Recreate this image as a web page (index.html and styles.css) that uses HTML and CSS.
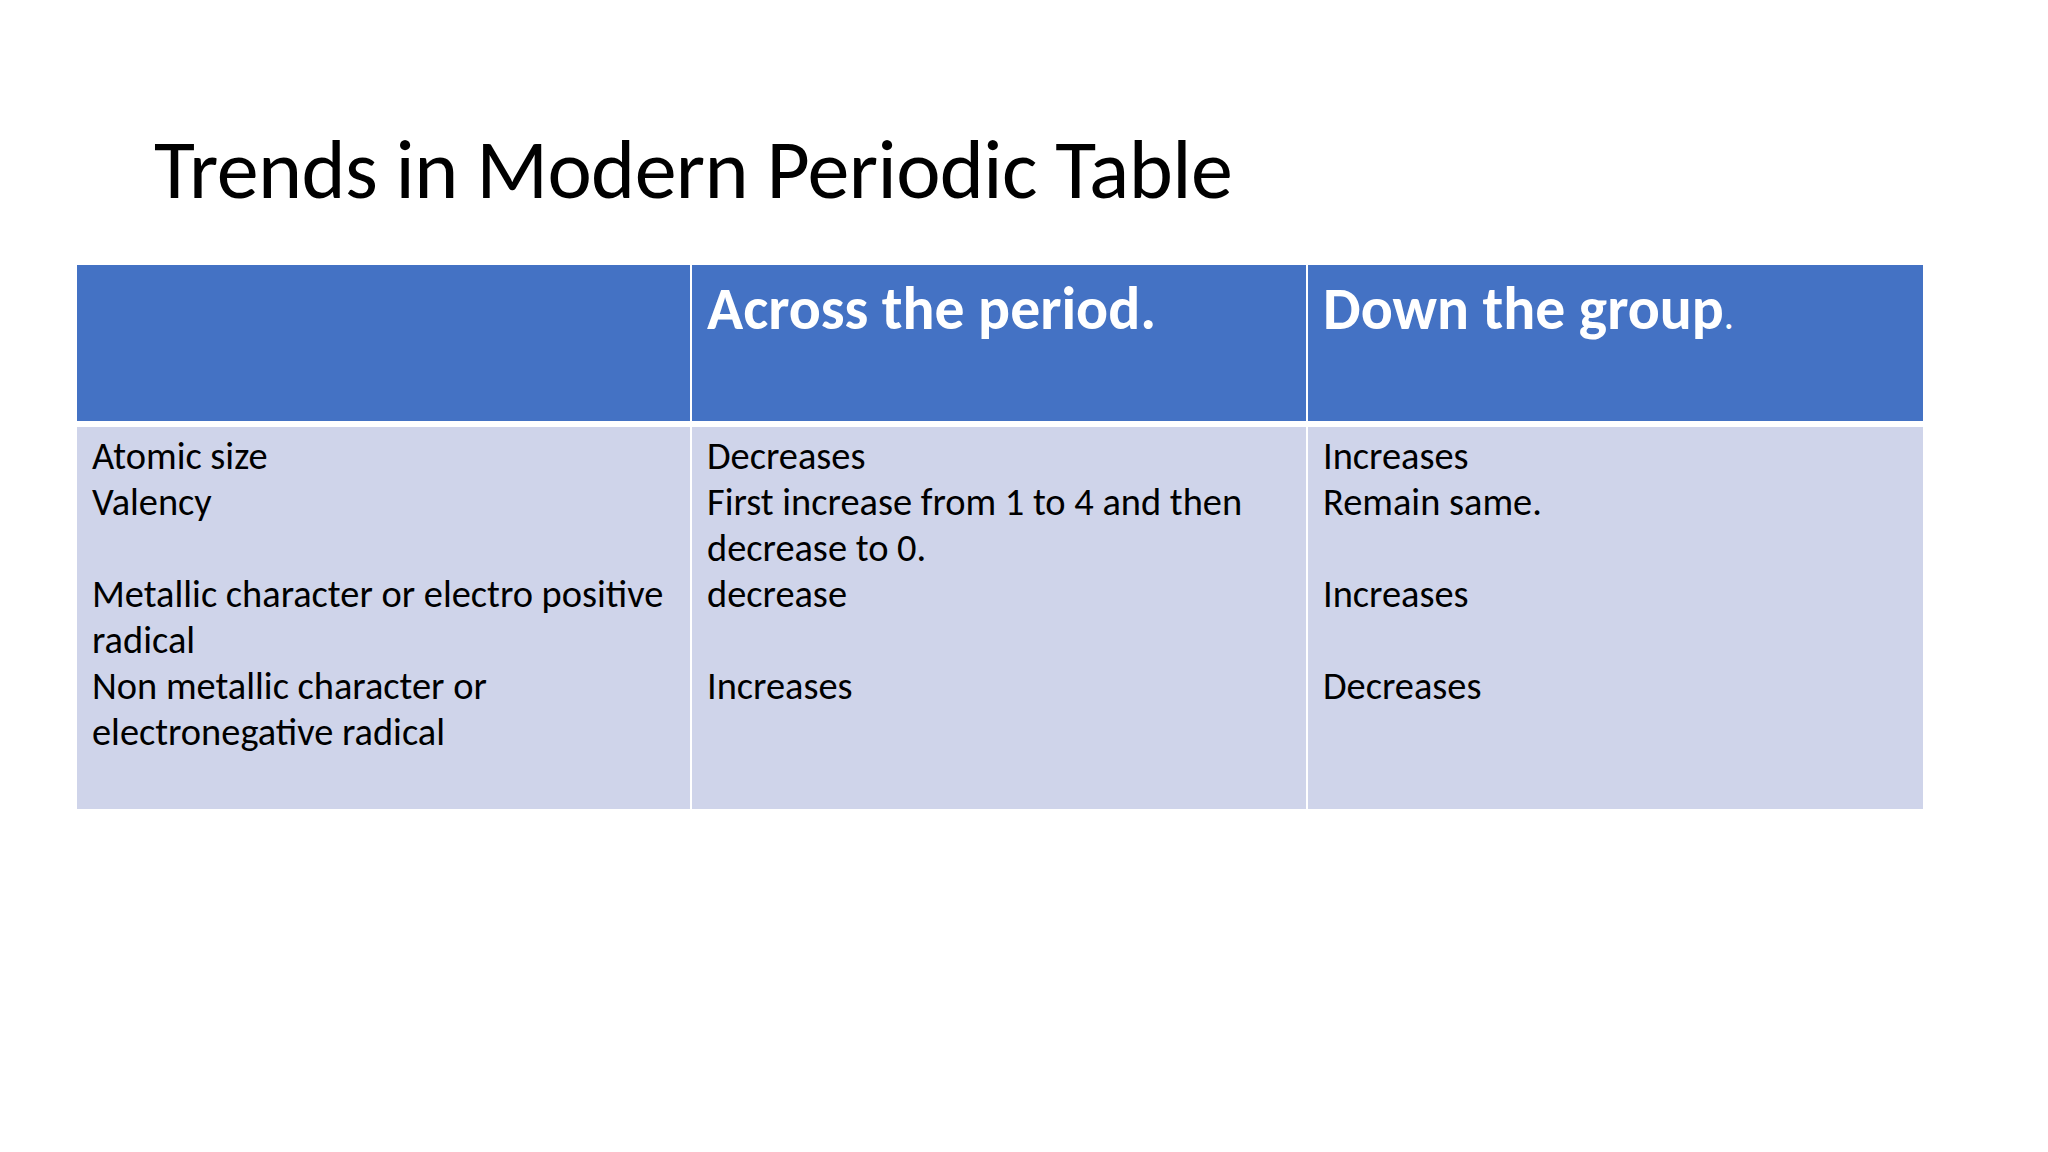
FILE: index.html
```html
<!DOCTYPE html>
<html lang="en">
<head>
<meta charset="utf-8">
<title>Trends in Modern Periodic Table</title>
<link rel="stylesheet" href="styles.css">
</head>
<body>
<div class="slide">
  <h1 class="title">Trends in Modern Periodic Table</h1>
  <table class="trends">
    <colgroup>
      <col class="c1"><col class="c2"><col class="c3">
    </colgroup>
    <thead>
      <tr>
        <th></th>
        <th>Across the period.</th>
        <th>Down the group<span class="dot">.</span></th>
      </tr>
    </thead>
    <tbody>
      <tr>
        <td>
          <p>Atomic size</p>
          <p>Valency</p>
          <p class="blank">&nbsp;</p>
          <p>Metallic character or electro positive<br>radical</p>
          <p>Non metallic character or<br>electronegative radical</p>
        </td>
        <td>
          <p>Decreases</p>
          <p>First increase from 1 to 4 and then<br>decrease to 0.</p>
          <p>decrease</p>
          <p class="blank">&nbsp;</p>
          <p>Increases</p>
        </td>
        <td>
          <p>Increases</p>
          <p>Remain same.</p>
          <p class="blank">&nbsp;</p>
          <p>Increases</p>
          <p class="blank">&nbsp;</p>
          <p>Decreases</p>
        </td>
      </tr>
    </tbody>
  </table>
</div>
</body>
</html>
```

FILE: styles.css
```css
html, body {
  margin: 0;
  padding: 0;
  background: #ffffff;
}

body {
  font-family: "Carlito", "Calibri", "Lato", "Liberation Sans", sans-serif;
  color: #000000;
}

.slide {
  width: 2048px;
  height: 1152px;
  box-sizing: border-box;
  padding: 127px 0 0 77px;
}

.title {
  margin: 0 0 53px 77px;
  font-size: 84px;
  font-weight: 400;
  line-height: 85px;
  letter-spacing: -0.6px;
  color: #000000;
}

.trends {
  width: 1846px;
  border-collapse: collapse;
  table-layout: fixed;
}

.trends col.c1 { width: 614px; }
.trends col.c2 { width: 616px; }
.trends col.c3 { width: 616px; }

.trends th {
  height: 159px;
  box-sizing: border-box;
  background: #4472c4;
  color: #ffffff;
  font-size: 59.7px;
  font-weight: 700;
  line-height: 71px;
  text-align: left;
  vertical-align: top;
  padding: 8px 15px 8px 15px;
  border-left: 2px solid #ffffff;
  border-right: 2px solid #ffffff;
  border-bottom: 6px solid #ffffff;
}

.trends th .dot {
  font-weight: 400;
  font-size: 40px;
}

.trends td {
  height: 385px;
  box-sizing: border-box;
  background: #cfd4ea;
  vertical-align: top;
  padding: 6px 15px 8px 15px;
  border-left: 2px solid #ffffff;
  border-right: 2px solid #ffffff;
  font-size: 38.4px;
  line-height: 46px;
}

.trends tr > :first-child { border-left: none; }
.trends tr > :last-child { border-right: none; }

.trends td p {
  margin: 0;
}
```
